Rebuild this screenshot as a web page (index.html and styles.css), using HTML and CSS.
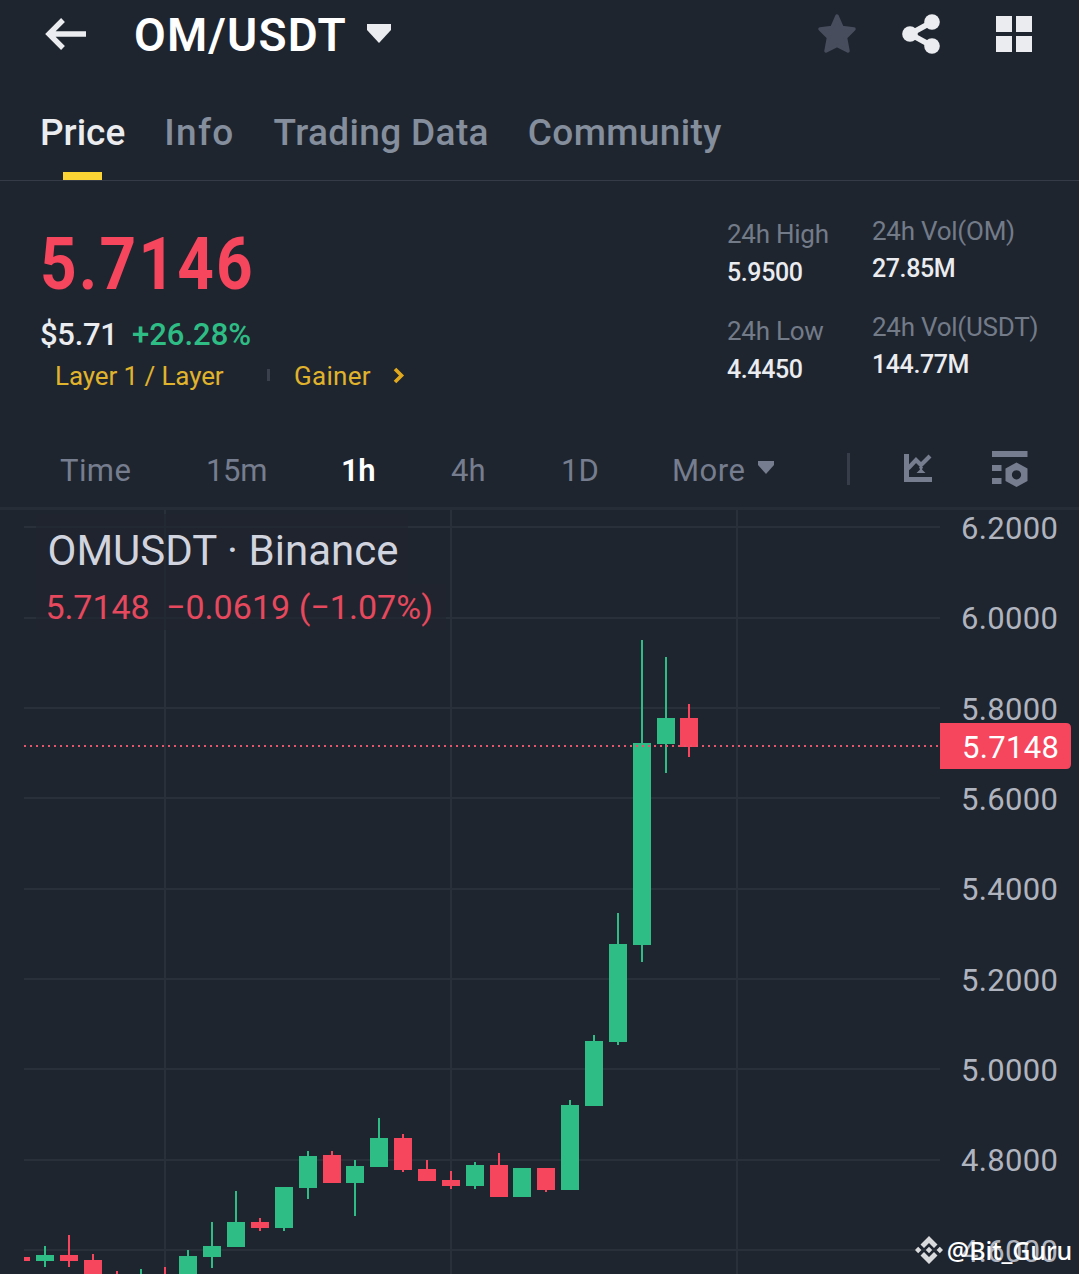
FILE: index.html
```
<!DOCTYPE html>
<html lang="en">
<head>
  <meta charset="UTF-8" />
  <meta name="viewport" content="width=device-width, initial-scale=1.0" />
  <title>OM/USDT</title>
  <link rel="stylesheet" href="styles.css">
</head>
<body>

  <header class="header">
    <svg class="back" width="42" height="34" viewBox="0 0 42 34">
      <path d="M18 3 L4 17 L18 31 M4 17 H41" fill="none" stroke="#eaecef" stroke-width="5.4" />
    </svg>
    <h1 class="pair">OM/USDT</h1>
    <svg class="pair-arrow" width="24" height="20" viewBox="0 0 24 20">
      <path d="M0 0 H24 V6 L12 19 L0 6 Z" fill="#eaecef" />
    </svg>
    <div class="actions">
      <svg width="40" height="42" viewBox="0 0 40 42">
        <path d="M20 3 L25 14.500 L37 16 L28.500 24.500 L31 38 L20 32.500 L9 38 L11.500 24.500 L3 16 L15 14.500 Z" fill="#474d5c" stroke="#474d5c" stroke-width="3.500" stroke-linejoin="round" />
      </svg>
      <svg width="40" height="42" viewBox="0 0 40 42">
        <path d="M31 9 L9 21 L31 33" fill="none" stroke="#eaecef" stroke-width="5.500" />
        <circle cx="31" cy="9" r="7.800" fill="#eaecef" />
        <circle cx="9" cy="21" r="7.800" fill="#eaecef" />
        <circle cx="31" cy="33" r="7.800" fill="#eaecef" />
      </svg>
      <svg width="36" height="36" viewBox="0 0 36 36">
        <path d="M0 0h16v16H0z M20 0h16v16H20z M0 20h16v16H0z M20 20h16v16H20z" fill="#eaecef" />
      </svg>
    </div>
  </header>

  <nav class="tabs">
    <a class="tab active">Price</a>
    <a class="tab info">Info</a>
    <a class="tab">Trading Data</a>
    <a class="tab">Community</a>
  </nav>

  <section class="summary">
    <div class="quote">
      <div class="last-price">5.7146</div>
      <div class="change"><span class="usd">$5.71</span><span class="percent">+26.28%</span></div>
      <div class="tags">
        <span class="layer">Layer 1 / Layer</span>
        <span class="tag-line"></span>
        <span class="gainer">Gainer</span>
        <svg width="12" height="18" viewBox="0 0 12 18">
          <path d="M2 2 L8.500 8.500 L2 15" fill="none" stroke="#e0a81c" stroke-width="3.600" />
        </svg>
      </div>
    </div>
    <div class="stats range">
      <div class="stat"><span class="label">24h High</span><span class="value">5.9500</span></div>
      <div class="stat"><span class="label">24h Low</span><span class="value">4.4450</span></div>
    </div>
    <div class="stats volume">
      <div class="stat"><span class="label">24h Vol(OM)</span><span class="value">27.85M</span></div>
      <div class="stat"><span class="label">24h Vol(USDT)</span><span class="value">144.77M</span></div>
    </div>
  </section>

  <nav class="intervals">
    <a class="time">Time</a>
    <a class="m15">15m</a>
    <a class="h1 active">1h</a>
    <a class="h4">4h</a>
    <a class="d1">1D</a>
    <a class="more">More</a>
    <svg class="more-arrow" width="16" height="13" viewBox="0 0 16 13">
      <path d="M0 0 H16 V4 L8 13 L0 4 Z" fill="#767d8e" />
    </svg>
    <span class="divider"></span>
    <svg class="icon-chart" width="28" height="32" viewBox="0 0 28 32">
      <path d="M0 1 H5 V24 H28 V29 H0 Z" fill="#767d8e" />
      <path d="M4 15.500 L12 7 L17 12 L26 3" fill="none" stroke="#767d8e" stroke-width="4.200" />
      <path d="M12.500 20 L16 16.500 L15 14 H19 L18 16.500 L21.500 20 Z" fill="#767d8e" />
    </svg>
    <svg class="icon-settings" width="36" height="38" viewBox="0 0 36 38">
      <path d="M0 1h35.500v6H0z M0 15h9.500v6H0z M0 28h9.500v6H0z" fill="#767d8e" />
      <path fill-rule="evenodd" d="M24.500 12.500 L35.500 18.500 V31 L24.500 37 L13.500 31 V18.500 Z M24.500 20.200 a4.600 4.600 0 1 0 .01 0 Z" fill="#767d8e" />
    </svg>
  </nav>

  <main class="chart">
    <svg width="1079" height="764" viewBox="0 510 1079 764">
      <g id="grid"></g>
      <rect class="legend-bg" x="36" y="514" width="372" height="70" />
      <rect class="legend-bg" x="36" y="584" width="410" height="46" />
      <g id="candles"></g>
      <line class="last-line" x1="24" y1="746" x2="940" y2="746" />
      <text class="symbol" x="47.500" y="565" textLength="351">OMUSDT · Binance</text>
      <text class="ohlc" x="45.500" y="619" textLength="104">5.7148</text>
      <text class="ohlc" x="166" y="619" textLength="267">−0.0619 (−1.07%)</text>
      <g id="axis"></g>
      <path class="last-tag" d="M940 723 H1066 Q1071 723 1071 728 V764 Q1071 769 1066 769 H940 Z" />
      <text class="axis-label last" x="962" y="758" textLength="97">5.7148</text>
    </svg>
    <div class="watermark">
      <svg width="28" height="28" viewBox="0 0 28 28">
        <path d="M14 0 L22.500 8.500 L19 12 L14 7 L9 12 L5.500 8.500 Z M14 28 L22.500 19.500 L19 16 L14 21 L9 16 L5.500 19.500 Z M3.200 10.800 L6.400 14 L3.200 17.200 L0 14 Z M24.800 10.800 L28 14 L24.800 17.200 L21.600 14 Z M14 10.800 L17.200 14 L14 17.200 L10.800 14 Z" fill="#d9dadc" />
      </svg>
      <span>@Bit_Guru</span>
    </div>
  </main>

  <script>
    // [wick x, body top, body bottom, wick top, wick bottom, up]
    const candles = [
      [45, 1255, 1261, 1246, 1267, 1],
      [69, 1255, 1261, 1235, 1267, 0],
      [93, 1260, 1290, 1254, 1290, 0],
      [117, 1280, 1290, 1271, 1290, 0],
      [141, 1280, 1290, 1269, 1290, 1],
      [165, 1280, 1290, 1267, 1290, 0],
      [188, 1256, 1290, 1250, 1290, 1],
      [212, 1246, 1257, 1222, 1268, 1],
      [236, 1222, 1247, 1191, 1247, 1],
      [260, 1222, 1228, 1218, 1231, 0],
      [284, 1187, 1228, 1187, 1231, 1],
      [308, 1156, 1188, 1151, 1199, 1],
      [332, 1155, 1183, 1151, 1183, 0],
      [355, 1166, 1183, 1160, 1216, 1],
      [379, 1138, 1167, 1118, 1167, 1],
      [403, 1138, 1170, 1134, 1172, 0],
      [427, 1169, 1181, 1160, 1181, 0],
      [451, 1180, 1186, 1171, 1189, 0],
      [475, 1165, 1186, 1162, 1189, 1],
      [499, 1165, 1197, 1153, 1197, 0],
      [522, 1168, 1197, 1168, 1197, 1],
      [546, 1168, 1190, 1168, 1192, 0],
      [570, 1105, 1190, 1100, 1190, 1],
      [594, 1041, 1106, 1035, 1106, 1],
      [618, 944, 1042, 913, 1045, 1],
      [642, 743, 945, 640, 962, 1],
      [666, 718, 744, 657, 773, 1],
      [689, 718, 747, 704, 757, 0]
    ];

    let grid = '';
    let axis = '';
    for (let i = 0; i < 9; i++) {
      const y = 527.3 + i * 90.35;
      grid += `<rect x="24" y="${Math.round(y) - 1}" width="916" height="2" />`;
      axis += `<text class="axis-label" x="961" y="${Math.floor(y) + 12}" textLength="97">${(6.2 - i * 0.2).toFixed(4)}</text>`;
    }
    for (const x of [165, 451, 737]) {
      grid += `<rect x="${x - 1}" y="510" width="2" height="764" />`;
    }
    document.getElementById('grid').innerHTML = grid;
    document.getElementById('axis').innerHTML = axis;

    let bars = '<rect class="down" x="24" y="1257" width="6" height="4" />';
    for (const [x, top, bottom, high, low, up] of candles) {
      bars += `<g class="${up ? 'up' : 'down'}">
        <rect x="${x - 1}" y="${high}" width="2" height="${low - high}" />
        <rect x="${x - 9}" y="${top}" width="18" height="${bottom - top}" />
      </g>`;
    }
    document.getElementById('candles').innerHTML = bars;
  </script>

</body>
</html>
```
FILE: styles.css
```
* {
  box-sizing: border-box;
}
body {
  margin: 0;
  width: 1079px;
  height: 1274px;
  overflow: hidden;
  background: #1f252f;
  color: #eaecef;
  font-family: Roboto, "Liberation Sans", sans-serif;
  white-space: nowrap;
}
svg {
  display: block;
  flex: none;
}
.header {
  display: flex;
  align-items: center;
  height: 67px;
  padding: 0 47px 0 45px;
}
.pair {
  width: 213px;
  margin: 3px 0 0 47px;
  font-size: 46px;
  font-weight: 600;
  letter-spacing: 1.2px;
  color: #fff;
}
.pair-arrow {
  margin-left: 20px;
}
.actions {
  display: flex;
  align-items: center;
  margin-left: auto;
}
.actions svg:nth-child(2) {
  margin: 0 55px 0 44px;
}
.tabs {
  display: flex;
  gap: 39px;
  height: 114px;
  padding: 39px 40px 0;
  border-bottom: 1px solid #363c47;
}
.tab {
  position: relative;
  height: 74px;
  font-size: 37px;
  line-height: 54px;
  font-weight: 500;
  letter-spacing: 0.35px;
  color: #848e9c;
}
.tab.active {
  letter-spacing: 0;
  color: #eaecef;
}
.tab.info {
  letter-spacing: 1.3px;
}
.tab.active::after {
  content: "";
  position: absolute;
  left: 23px;
  bottom: 0;
  width: 39px;
  height: 8px;
  background: #fcd535;
}
.summary {
  display: flex;
  height: 249px;
  padding-top: 31px;
}
.quote {
  width: 727px;
  padding-left: 40px;
}
.last-price {
  height: 104px;
  font-size: 73px;
  line-height: 104px;
  font-weight: 700;
  letter-spacing: 2.5px;
  color: #f6465d;
  transform: scaleX(0.875);
  transform-origin: left;
}
.change {
  display: flex;
  height: 38px;
  font-size: 31px;
  line-height: 38px;
  font-weight: 500;
}
.usd {
  width: 92px;
  letter-spacing: -0.3px;
}
.percent {
  color: #2ebd85;
}
.tags {
  display: flex;
  align-items: center;
  height: 44px;
  padding-left: 15px;
  font-size: 26px;
  color: #e0b32c;
}
.layer {
  width: 212px;
  letter-spacing: -0.1px;
}
.tag-line {
  width: 3px;
  height: 12px;
  margin-bottom: 3px;
  background: #3a404c;
}
.gainer {
  width: 99px;
  margin-left: 24px;
  letter-spacing: 0.3px;
}
.stats {
  display: flex;
  flex-direction: column;
  gap: 21px;
}
.range {
  width: 145px;
  padding-top: 3px;
}
.stat {
  display: flex;
  flex-direction: column;
  height: 76px;
  line-height: 38px;
}
.label {
  font-size: 26px;
  letter-spacing: -0.25px;
  color: #737b89;
}
.value {
  font-size: 25px;
  font-weight: 500;
  letter-spacing: -0.4px;
}
.range .value {
  padding-top: 1px;
}
.volume .stat + .stat {
  margin-top: -1px;
}
.intervals {
  display: flex;
  align-items: center;
  height: 80px;
  padding-left: 60px;
  border-bottom: 3px solid #272d37;
  font-size: 31px;
  color: #767d8e;
}
.intervals a {
  padding-top: 3px;
}
.intervals .active {
  color: #fff;
  font-weight: 600;
}
.time {
  width: 146px;
  letter-spacing: 0.4px;
}
.m15 {
  width: 135px;
  letter-spacing: -0.3px;
}
.h1 {
  width: 110px;
  letter-spacing: -0.5px;
}
.h4 {
  width: 110px;
}
.d1 {
  width: 111px;
}
.more {
  width: 86px;
  letter-spacing: 0.5px;
}
.more-arrow {
  margin-bottom: 2px;
}
.divider {
  width: 3px;
  height: 32px;
  margin-left: 73px;
  background: #373d49;
}
.icon-chart {
  margin-left: 54px;
}
.icon-settings {
  margin-left: 60px;
}
.chart {
  position: relative;
}
#grid {
  fill: #2a303a;
}
.legend-bg {
  fill: #1f252f;
  opacity: 0.6;
}
.up {
  fill: #2ebd85;
}
.down {
  fill: #f6465d;
}
.last-line {
  stroke: #e4566b;
  stroke-width: 2;
  stroke-dasharray: 2 4;
}
.symbol {
  font-size: 42px;
  fill: #d1d4de;
}
.ohlc {
  font-size: 34px;
  fill: #e6485d;
}
.axis-label {
  font-size: 31px;
  fill: #b0b4bf;
}
.last-tag {
  fill: #f6465d;
}
.axis-label.last {
  fill: #fff;
}
.watermark {
  position: absolute;
  right: 7px;
  bottom: 7px;
  display: flex;
  align-items: center;
  gap: 4px;
  color: #fff;
  font-family: "Noto Sans", sans-serif;
  font-size: 25px;
  font-weight: 500;
  letter-spacing: -0.1px;
}
```
